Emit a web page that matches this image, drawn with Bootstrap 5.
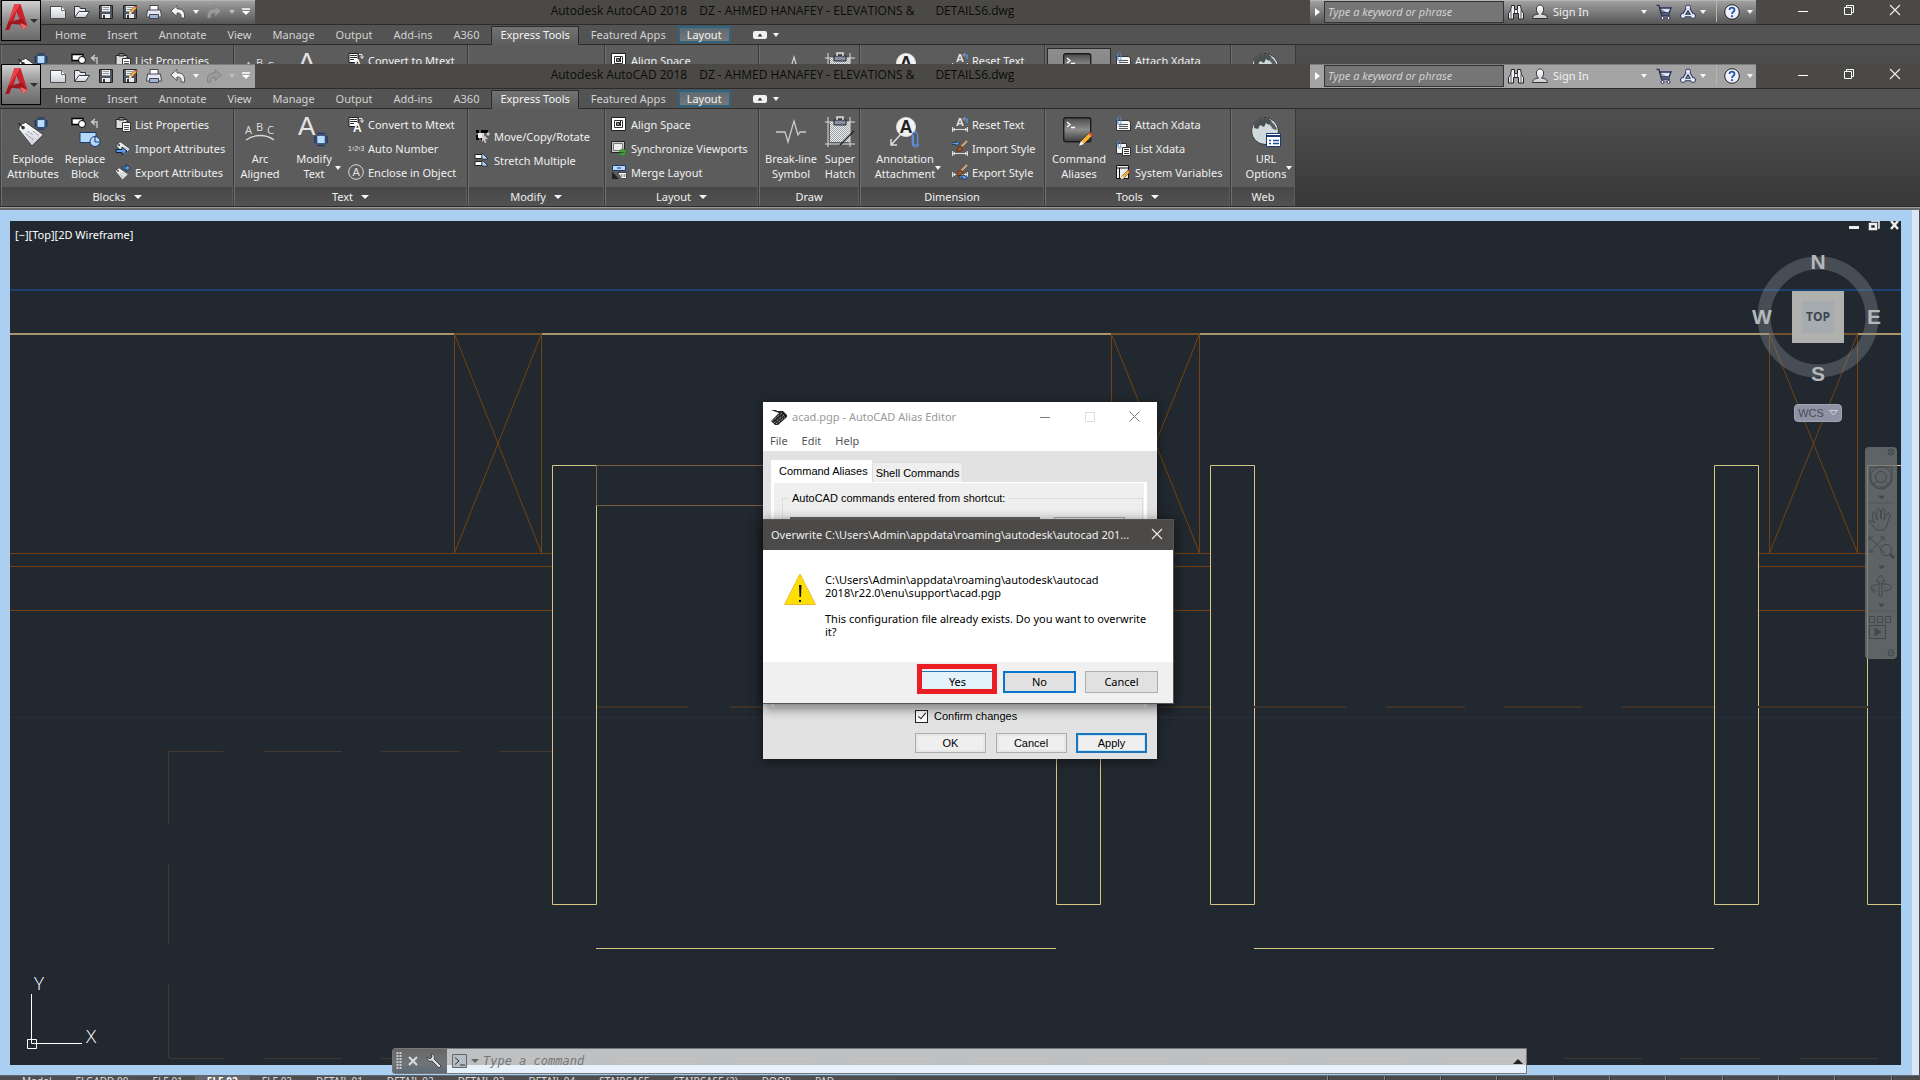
<!DOCTYPE html>
<html lang="en">
<head>
<meta charset="utf-8">
<meta name="viewport" content="width=device-width, initial-scale=1">
<title>Autodesk AutoCAD 2018</title>
<link href="https://cdn.jsdelivr.net/npm/bootstrap@5.3.0/dist/css/bootstrap.min.css" rel="stylesheet">
<style>
:root{--ui:"Noto Sans","Open Sans",sans-serif;--win:"Liberation Sans",Arial,sans-serif;--ink:#f0f0f0}
body{font-family:var(--ui);font-size:11px;line-height:15px;background:#4b4946;color:var(--ink);overflow:hidden}
button,a{font:inherit;color:inherit;text-decoration:none}
button{background:none;border:0;padding:0}
svg{display:block;flex:none}
.i16{width:16px;height:16px}
.i32{width:32px;height:32px}
.dn{width:0;height:0;border:3px solid transparent;border-top:4px solid #f4f4f4;border-bottom:0;flex:none}
.dn.wide{border-width:4px 4px 0}
.dn.off{border-top-color:#c0c0c0}
.dn.dim{border-top-color:#666}

/* application header */
.band{height:64px;overflow:hidden;flex:none}
.appbtn{left:1px;top:0;width:40px;height:41px;border:1px solid #000;background:linear-gradient(#d0d0d0,#8e8e8e 50%,#6a6a6a);z-index:2;padding:0 0 8px 2px}
.appbtn .dn{border-top-color:#333;margin:8px 0 0 1px}
.titlerow{height:24px;background:#4b4946;padding-left:41px}
.qat,.info{height:24px;background:#a3a3a3;border-top:1px solid #7d7d7d;padding-bottom:2px}
.qat{width:214px;padding-left:5px}
.band .qat,.band .info{background:linear-gradient(#a0a0a0,#555);border-top-color:#b5b5b5}
.b24{width:24px}.b12{width:12px}.b16{width:16px}.b14{width:14px}
.apptitle{color:#0b0b0b;font:12px/22px "Open Sans","Noto Sans",sans-serif;padding-bottom:2px}
.gap-a{margin-left:12px}.gap-b{margin-left:21px}
.info{width:446px}
.search{width:180px;height:22px;background:#757575;border:1px solid #333;color:#ddd;padding:0 0 0 3px;font-style:italic;border-radius:0;outline:0}
.search::placeholder{color:#d2d2d2;opacity:1}
.signin{width:100px;padding:0 5px 0 1px}
.vsep{width:1px;height:21px;background:#b4b4b4;margin:0 3px 0 4px}
.winbtns{padding:0 2px 0 24px}
.winbtn{width:46px;height:20px}
.tabrow{height:21px;background:#535353;border-top:1px solid #2b2b2b;border-bottom:1px solid #2b2b2b;padding-left:45px;gap:1px}
.rtab{padding:0 8px;margin:0 1px;border:1px solid transparent;height:19px;line-height:17px;color:#d2d2d2}
.rtab:hover{color:#fff}
.rtab.on{background:linear-gradient(#727272,#5d5d5d);border-color:#2b2b2b;border-bottom-color:#5d5d5d;color:#f4f4f4;height:20px;margin-top:1px;line-height:15px}
.rtab.ctx{background:linear-gradient(#5d6a72,#777);border:2px solid #2f6480;color:#f4f4f4;line-height:13px;height:17px;padding:0 7px;margin-top:1px}
.rshow{margin-left:20px;gap:6px}
.ribbon{height:98px;background:linear-gradient(#4f4f4f,#383838);display:grid;grid-template-columns:233px 234px 137px 154px 101px 185px 186px 65px;padding-left:1px;border-bottom:1px solid #2b2b2b}
.rpanel{background:#5c5c5c;border-left:1px solid #6e6e6e;border-right:1px solid #3a3a3a;min-width:0}
.rbody{height:78px;padding:3px 0 0 1px}
.rname{height:19px;background:linear-gradient(#474747,#525252);line-height:19px;margin-right:1px}
.big{height:74px;padding-top:3px;line-height:15px;text-align:center;border:1px solid transparent}
.big .i32{margin-bottom:3px}
.big>.dn{position:absolute;right:2px;bottom:15px}
.w60{width:60px}.w48{width:48px}.w44{width:44px}.w38{width:38px}.w78{width:78px}.w64{width:64px}
.band .lit{background:linear-gradient(#8d8d8d,#777);border-color:#2b2b2b}
.stack{padding-left:4px}
.stack.mid{padding-top:12px}
.small-b{height:24px;gap:4px;white-space:nowrap}
.under{height:3px;background:linear-gradient(#9a9a9a 33%,#6a6a6a 34%)}

/* drawing area */
.mdi{background:#abcff1;padding:11px 18px 10px 10px;border-right:1px solid #4b4946;min-height:0}
.mdi::after{content:"";position:absolute;top:0;bottom:0;right:0;width:7px;background:#dbe6f5}
.view{background:#21282f}
.vlabel{left:5px;top:6px;color:#fff}
.vwin{right:0;top:0;height:13px;margin-right:-3px}
.vwin button{width:20px}
.cube{right:16px;top:28px;width:134px;height:136px}
.wcs{right:59px;top:183px;width:48px;height:18px;background:rgba(160,165,184,.85);border-radius:4px;color:#484d58;border:1px solid #a0a5b4;font-family:var(--win)}
.wcs svg{margin-left:5px}
.navbar-v{right:4px;top:226px;width:32px;height:212px;background:rgba(110,115,116,.8);border-radius:4px;color:#42484c}
.cmd{left:392px;right:392px;bottom:1px;height:26px;border:1px solid #777;border-radius:3px 0 0 3px;z-index:3}
.cmdl{width:54px;background:linear-gradient(#676767,#707478 60%,#5d6a76);padding-left:3px;gap:6px}
.cmdr{background:rgba(255,255,255,.71);padding-left:5px}
.cmdr input{background:none;border:0;outline:0;font:italic 12px "DejaVu Sans Mono",monospace;padding:0 0 0 4px;color:#555}
.cmdr input::placeholder{color:#777;opacity:1}
.up{border:5px solid transparent;border-bottom:5px solid #222;border-top:0;margin:0 3px 0}
.foot{height:5px;background:#4a4a4a;overflow:hidden;border-top:1px solid #5c6a77}
.ltabs{width:897px;background:#4e4e4e;height:24px;padding-left:10px}
.ltabs a{padding:0 12px;white-space:nowrap;font-size:10px;line-height:10px;color:#ddd}
.ltabs a.on{font-weight:700;color:#fff;background:#666}
.stat{width:620px;height:24px}
.stat i{border-left:1px solid #888;border-right:1px solid #333}

/* dialogs */
.dlg{color:#000}
.alias{left:763px;top:402px;width:394px;height:357px;background:#e2e2e2;box-shadow:0 2px 10px rgba(0,0,0,.5);font-family:var(--win)}
.alias .cap{height:49px;background:#fff;font-family:var(--ui)}
.capline{height:29px;padding-left:8px;color:#999}
.capline .nm{margin-left:5px}
.cbtn{width:45px;height:28px}
.menu2{padding-left:7px;gap:14px;color:#555;line-height:20px}
.abody{padding:9px 10px 0 8px}
.atab{height:20px;line-height:18px;background:#efefef;border:1px solid #dcdcdc;border-bottom:0;padding:0 3px}
.atab.on{height:22px;line-height:18px;background:#fff;padding:0 3px 2px 7px;border-color:#fff}
.apane{background:#efefef;border:3px solid #fff;border-bottom:0;height:225px;padding:9px 1px 0 8px;border-top-width:1px}
.apane fieldset{border:1px solid #dcdcdc;height:190px;position:relative;margin-top:6px;padding:18px 17px 0 7px}
.apane legend{position:absolute;top:-8px;left:5px;width:auto;font-size:11px;line-height:15px;margin:0;padding:0 4px;background:#efefef;float:none}
.lst{width:250px;height:22px;border:2px solid #666;background:#fff;border-radius:0}
.wbtn{width:73px;height:22px;background:#e1e1e1;border:1px solid #adadad;color:#000;line-height:18px;padding:0}
.wbtn.std{width:71px;height:20px;border:1px solid #adadad;box-shadow:inset 0 0 0 2px #e6e6e6;background:#efefef}
.wbtn.std.def{border:2px solid #1c74bb;box-shadow:inset 0 0 0 1px #bfe6fb;line-height:16px}
.wbtn.foc{border:2px solid #0b74cc}
.wbtn.hot{background:#e3f1fb;border-color:#1c74bb}
.abot{left:152px;right:10px;bottom:6px}
.confirm{margin-bottom:9px}
.chk{appearance:none;width:13px;height:13px;border:1px solid #222;background:#fff;margin:0 6px 0 0;position:relative}
.chk:checked::after{content:"";position:absolute;left:4px;top:0;width:4px;height:8px;border:solid #222;border-width:0 1px 1px 0;transform:rotate(40deg)}
.over{left:763px;top:519px;width:411px;height:185px;background:#fff;box-shadow:0 3px 12px rgba(0,0,0,.6);z-index:4;border:1px solid #555;border-left:0}
.over .ocap{height:30px;background:#4b4a48;color:#eee;padding:0 0 2px 8px}
.omsg{height:112px;padding:23px 10px 0 21px;gap:9px;line-height:13px}
.omsg p{margin:0 0 13px}
.ofoot{height:41px;background:#f0f0f0;padding:9px 15px 0 0;gap:9px}
.ring{left:154px;top:144px;width:80px;height:30px;border:5px solid #ea1c24;pointer-events:none}
</style>
<script src="https://cdn.jsdelivr.net/npm/bootstrap@5.3.0/dist/js/bootstrap.bundle.min.js"></script>
</head>
<body class="vh-100 d-flex flex-column">

<svg width="0" height="0" class="position-absolute" aria-hidden="true">
<defs>
<linearGradient id="gl" x1="0" y1="0" x2="0" y2="1"><stop offset="0" stop-color="#fff"/><stop offset="1" stop-color="#c9ced6"/></linearGradient>
<linearGradient id="gd" x1="0" y1="0" x2="0" y2="1"><stop offset="0" stop-color="#4a4a4a"/><stop offset=".5" stop-color="#8d8d8d"/><stop offset="1" stop-color="#3c3c3c"/></linearGradient>
<pattern id="hat" width="2" height="2" patternUnits="userSpaceOnUse"><path d="M0 0h1v1h-1zM1 1h1v1h-1z" fill="#9aa0a8"/></pattern>
<symbol id="logo" viewBox="0 0 24 28"><path d="M1 27 10 1h6l7 22-5 4-3-7-8 1-2 6z" fill="#c8232c"/><path d="M10 1h6L4 19z" fill="#e8434a"/><path d="M12 9l3 7-6 2z" fill="#8d8d8d"/><path d="M4 19l14-3 4 6-15-1-3 6-3 0z" fill="#9e1820"/><path d="M16 20l7 3-5 4z" fill="#e56a6e"/></symbol>
<symbol id="new" viewBox="0 0 16 16"><path d="M.5 2.500h11l4 4v8h-15z" fill="url(#gl)" stroke="#4a4a4a"/><path d="M11.500 2.500v4h4" fill="#fff" stroke="#666"/></symbol>
<symbol id="open" viewBox="0 0 16 16"><path d="M.5 13.500v-11h5l1 2h5v3" fill="#e6e9ee" stroke="#333"/><path d="M.5 13.500 5 7.500h10.500l-4 6z" fill="url(#gl)" stroke="#333a44"/></symbol>
<symbol id="save" viewBox="0 0 16 16"><path d="M1.500 1.500h13v13h-13z" fill="#4c5560" stroke="#222"/><path d="M4 2h8v5.500H4zM4 10h8v4H4z" fill="#e9ecf0"/><path d="M5 11h2v3H5z" fill="#333"/><path d="M5 3.500h6M5 5.500h6" stroke="#999"/></symbol>
<symbol id="print" viewBox="0 0 16 16"><path d="M4 1.500h8v5H4z" fill="#fff" stroke="#445"/><path d="M1.500 6h13l1 7h-15z" fill="#e4e8ee" stroke="#445"/><path d="M3.500 10.500h9v4h-9z" fill="#9db4d6" stroke="#445"/></symbol>
<symbol id="undo" viewBox="0 0 16 16"><path d="M.8 7 7 1.500v3.300c6 0 8 3 7.500 9.200h-3.500c.6-4-.8-5-4-5v3.500z" fill="#f2f2f2" stroke="#444" stroke-width=".9"/></symbol>
<symbol id="redo" viewBox="0 0 16 16"><path d="M15.200 7 9 1.500v3.300c-6 0-8 3-7.500 9.200H5c-.6-4 .8-5 4-5v3.500z" fill="#9b9b9b" stroke="#808080" stroke-width=".9"/></symbol>
<symbol id="pen" viewBox="0 0 16 16"><path d="M1 15l2-5 9-9 3 3-9 9z" fill="#f2b43c" stroke="#4a3010" stroke-width=".8"/><path d="M1 15l2-5 3 3z" fill="#fff"/><path d="M10.500 2.500l3 3 1.500-1.500-3-3z" fill="#d6504a"/></symbol>
<symbol id="bino" viewBox="0 0 16 16"><path d="M3.500 1.500h3v4h3v-4h3l1 5 2 3v5.500h-5V9.500H5.500V15h-5V9.500l2-3z" fill="#eef1f5" stroke="#222"/><path d="M3 6v8.500M13 6v8.500M6.500 5v4M9.500 5v4" stroke="#555"/></symbol>
<symbol id="user" viewBox="0 0 16 16"><path d="M8 1c5 0 4 8 1.500 9 4 .5 6 2 6 4.500H.5c0-2.500 2-4 6-4.500C4 9 3 1 8 1z" fill="url(#gl)" stroke="#333"/></symbol>
<symbol id="cart" viewBox="0 0 16 16"><path d="M.5 1.500H3L5.500 11H14M3.500 4h11.500l-2 5H5z" fill="#dfe5f5" stroke="#26325a" stroke-width="1.300"/><circle cx="6.500" cy="14" r="1.500" fill="#fff" stroke="#26325a"/><circle cx="12.500" cy="14" r="1.500" fill="#fff" stroke="#26325a"/></symbol>
<symbol id="net" viewBox="0 0 16 16"><path d="M8 4 3.500 11.500h9z" fill="none" stroke="#26325a" stroke-width="3.600" stroke-linejoin="round"/><g fill="#e8ecf6" stroke="#26325a"><circle cx="8" cy="3.500" r="2.500"/><circle cx="3" cy="12" r="2.500"/><circle cx="13" cy="12" r="2.500"/></g><path d="M8 4 3.500 11.500h9z" fill="none" stroke="#e0e5f2" stroke-width="1.600" stroke-linejoin="round"/></symbol>
<symbol id="help" viewBox="0 0 16 16"><circle cx="8" cy="8" r="7.300" fill="#eef2fa" stroke="#222"/><path d="M5.500 6c0-3.500 5.200-3 5 0 0 1.800-2.500 1.800-2.500 4" fill="none" stroke="#2a50a8" stroke-width="1.800"/><circle cx="8" cy="12.200" r="1.100" fill="#2a50a8"/></symbol>
<symbol id="w-min" viewBox="0 0 12 12"><path d="M1 7.500h10" stroke="#fff"/></symbol>
<symbol id="w-res" viewBox="0 0 12 12"><path d="M1.500 3.500h7v7h-7zM3.500 3V1.500h7v7H9" fill="none" stroke="#fff"/></symbol>
<symbol id="w-x" viewBox="0 0 12 12"><path d="M1 1l10 10M11 1 1 11" stroke="currentColor" stroke-width="1.100"/></symbol>
<symbol id="blk" viewBox="0 0 16 16"><path d="M3.500 3.500h9v9h-9z" fill="#b8dcfa" stroke="#1c3a70"/><path d="M1.500 4v8M14.500 4v8M4 1.500h8M4 14.500h8" stroke="#1c3a70" stroke-width="1.500"/></symbol>
<symbol id="tag" viewBox="0 0 32 32"><path d="M3 12l1-5 7-3 20 14-13 13z" fill="url(#gl)" stroke="#333" transform="translate(-1 1)"/><circle cx="7" cy="11" r="2" fill="#333"/><path d="M2 6l5 5" stroke="#222" stroke-width="1.500"/><path d="M12 15l6 4M18 15l7 5M10 18l9 7" stroke="#78808a" stroke-dasharray="3 1"/></symbol>
<symbol id="explode" viewBox="0 0 32 32"><use href="#tag" width="28" height="30" y="1"/><use href="#blk" x="17" y="0" width="14" height="15"/></symbol>
<symbol id="replace" viewBox="0 0 32 32"><path d="M3 2.500h11v6H3z" fill="#fff" stroke="#000" stroke-width="1.300"/><circle cx="13" cy="8" r="3.500" fill="#fff" stroke="#000"/><path d="M28 12V6h-5m3-3-3.500 3L26 9" fill="none" stroke="#ccc" stroke-width="1.300"/><path d="M11 16.500h16v10H11z" fill="#b4d8fa" stroke="#1c3a70"/><circle cx="26" cy="25.500" r="5" fill="#b4d8fa" stroke="#1c3a70"/><path d="M26 21v5h4" fill="none" stroke="#1c3a70"/></symbol>
<symbol id="lprop" viewBox="0 0 16 16"><path d="M1 3.500h11v9H1z" fill="#ddd" stroke="#222"/><path d="M4 4V1.500h5V4z" fill="#888" stroke="#222"/><path d="M7.500 6.500h8v9h-8z" fill="#fff" stroke="#333"/><path d="M9 9.500h5M9 11.500h5M9 13.500h5" stroke="#555"/></symbol>
<symbol id="impa" viewBox="0 0 16 16"><use href="#tag" width="15" height="15" y="0" x="1"/><path d="M1 9.500h6V7l5 4-5 4v-2.500H1z" fill="#5a96e6" stroke="#123"/></symbol>
<symbol id="expa" viewBox="0 0 16 16"><use href="#tag" width="14" height="14" y="2"/><path d="M7 3h4V.5l4.500 3.500L11 7.500V5H7z" fill="#5a96e6" stroke="#123" stroke-width=".7"/></symbol>
<symbol id="arc" viewBox="0 0 32 32"><g fill="#d8d8d8" font-family="Noto Sans" font-size="11"><text x="1" y="18">A</text><text x="12" y="15">B</text><text x="23" y="18">C</text></g><path d="M2 24c8-6 20-6 28 0" fill="none" stroke="#d8d8d8" stroke-width="1.300"/></symbol>
<symbol id="modt" viewBox="0 0 32 32"><text x="0" y="19" fill="#e4e4e4" font-family="Liberation Sans" font-size="26">A</text><use href="#blk" x="15" y="16" width="16" height="15"/></symbol>
<symbol id="cvt" viewBox="0 0 16 16"><path d="M1 1.500h9v9H1z" fill="#fff" stroke="#222"/><path d="M2 3.500h7M2 5.500h7M2 7.500h4" stroke="#333"/><path d="M11 2.500h3V6m-1.500-1.500L14 6.500l1.500-2" fill="none" stroke="#eee"/><text x="5" y="16" fill="#fff" font-family="Liberation Sans" font-weight="700" font-size="12">A</text></symbol>
<symbol id="num" viewBox="0 0 16 16"><text x="0" y="11" fill="#e8e8e8" font-family="Liberation Sans" font-size="7">1›2›3</text></symbol>
<symbol id="enc" viewBox="0 0 16 16"><circle cx="8" cy="8" r="7.300" fill="none" stroke="#d8d8d8"/><text x="4.500" y="12" fill="#e4e4e4" font-family="Liberation Sans" font-size="11">A</text></symbol>
<symbol id="mcr" viewBox="0 0 16 16"><path d="M2 3.500h12M2 10.500h6M3.500 2v10M11.500 2v4" stroke="#000" stroke-width="3" stroke-dasharray="3 2"/><path d="M4 5h6v5H4z" fill="#eee"/><path d="M8 5l6 6-3 .5 1.500 3-1.500.5-1.500-3L8 14z" fill="#ccc"/><path d="M12 6h4M14 4v4" stroke="#fff" stroke-width=".8"/></symbol>
<symbol id="str" viewBox="0 0 16 16"><path d="M1 2.500h7v4H1zM1 9.500h7v4H1z" fill="#fff" stroke="#222"/><path d="M8 1l6 6H8zM8 8l6 6H8z" fill="#b4d8fa" stroke="#123" stroke-width=".7"/></symbol>
<symbol id="alg" viewBox="0 0 16 16"><path d="M.5 1.500h14v13H.5z" fill="#fff" stroke="#222"/><path d="M3.500 4.500h8v7h-8z" fill="none" stroke="#333"/><path d="M5.500 6.500h3v3h-3zM9.500 5v5" fill="#888" stroke="#222"/></symbol>
<symbol id="syn" viewBox="0 0 16 16"><path d="M.5 1.500h13v11H.5z" fill="#ccc" stroke="#222"/><path d="M2.500 3.500h9v7h-9z" fill="#ececec" stroke="#777"/><path d="M8.500 12c0-3 4-4 5.500-2l1-1v4h-4l1.500-1c-1-1-2-1-2.500.5zM15 13c-.5 3-4 3.500-5.500 2l-1 1v-3" fill="#3da33d" stroke="#1f6b1f" stroke-width=".5"/></symbol>
<symbol id="mrg" viewBox="0 0 16 16"><path d="M1.500 1.500h13v5h-13z" fill="#b4d8fa" stroke="#1c3a70"/><path d="M6 4h4" stroke="#1c3a70"/><path d="M1 7.500 8 15H1z" fill="#222"/><path d="M6.500 8.500h9v6h-5z" fill="#fff" stroke="#444"/><path d="M9.500 10h2v3h-2zM12.500 10h2v3h-2z" fill="#999"/></symbol>
<symbol id="brk" viewBox="0 0 32 32"><path d="M1 16h9l3 10 6-21 4 14 2-3h6" fill="none" stroke="#ccc" stroke-width="1.300"/></symbol>
<symbol id="hatch" viewBox="0 0 32 32"><path d="M6 6h20v20H6z" fill="#eee"/><path d="M6 6h20v20H6z" fill="url(#hat)"/><path d="M4 1v30M26 1v30M1 6h30M1 28h30" stroke="#ddd"/><path d="M10 4h12v5H10z" fill="#8690a0" stroke="#222"/><path d="M13 4V1h6v3" fill="none" stroke="#ddd" stroke-width="1.500"/><path d="M30 15 16 29" stroke="#222" stroke-width="1.500"/></symbol>
<symbol id="clip" viewBox="0 0 8 16"><path d="M2 4v7c0 3 4 3 4 0V4c0-4-5-4-5 0v7c0 5 6 5 6 1" fill="none" stroke="#5a8fd8" stroke-width="1.200"/></symbol>
<symbol id="ann" viewBox="0 0 32 32"><path d="M13 17 2 29m0-6v6h6" fill="none" stroke="#ddd" stroke-width="1.500"/><circle cx="17" cy="11" r="9.500" fill="#f2f2f2" stroke="#ddd"/><text x="10.500" y="17" fill="#222" font-family="Liberation Sans" font-weight="700" font-size="18">A</text><use href="#clip" x="22" y="15" width="9" height="17"/></symbol>
<symbol id="dimb" viewBox="0 0 16 16"><path d="M.5 10v5M15.500 10v5M1 12.500h14M3 11l-2 1.500L3 14M13 11l2 1.500L13 14" fill="none" stroke="#ddd"/></symbol>
<symbol id="rst" viewBox="0 0 16 16"><use href="#dimb" y="1" width="16" height="16"/><text x="4" y="10" fill="#e4e4e4" font-family="Liberation Sans" font-weight="700" font-size="11">A</text><path d="M12 3h3v4M13 1l-2 2 2 2" fill="none" stroke="#6aa4ee"/></symbol>
<symbol id="brush" viewBox="0 0 16 16"><path d="M15 1 9 7" stroke="#d6a878" stroke-width="1.800"/><path d="M5 11c0-4 3-5 5-4 1 3-1 5-5 4z" fill="#a05a28" stroke="#5a2c10"/></symbol>
<symbol id="ims" viewBox="0 0 16 16"><use href="#dimb" y="1" width="16" height="16"/><use href="#brush" width="16" height="16"/><path d="M0 2.500h4V1l4 2.500L4 6V4.500H0z" fill="#5a96e6" stroke="#123" stroke-width=".6"/></symbol>
<symbol id="exs" viewBox="0 0 16 16"><use href="#dimb" y="-2" width="16" height="16"/><use href="#brush" width="16" height="16"/><path d="M7 12h4v-1.500l5 3-5 2.500v-2H7z" fill="#5a96e6" stroke="#123" stroke-width=".6"/></symbol>
<symbol id="cmdi" viewBox="0 0 32 32"><rect x=".7" y="1.700" width="27" height="24" rx="2" fill="url(#gd)" stroke="#1c1c1c" stroke-width="1.400"/><path d="M4 6l3 2.500L4 11M8 11.500h4" fill="none" stroke="#fff" stroke-width="1.300"/><use href="#pen" x="15" y="15" width="16" height="16"/></symbol>
<symbol id="atx" viewBox="0 0 16 16"><path d="M1.500 4.500h12l2 2v8h-14z" fill="#f4f4f4" stroke="#333"/><path d="M4 8.500h9M4 10.500h9M4 12.500h9" stroke="#555"/><use href="#clip" x="2" y="0" width="5" height="10"/></symbol>
<symbol id="lsx" viewBox="0 0 16 16"><path d="M1.500 3.500h10v10h-10z" fill="#f4f4f4" stroke="#333"/><use href="#clip" x="2" y="0" width="5" height="9"/><path d="M7.500 7.500h8v8h-8z" fill="#fff" stroke="#333"/><path d="M9 9.500h5M9 11.500h5M9 13.500h5" stroke="#333"/></symbol>
<symbol id="sys" viewBox="0 0 16 16"><path d="M1.500 1.500h12v13h-12z" fill="#eee" stroke="#111"/><path d="M1.500 4h12M4.500 4v10" stroke="#111"/><use href="#pen" x="5" y="5" width="11" height="11"/></symbol>
<symbol id="url" viewBox="0 0 32 32"><circle cx="15" cy="15" r="13.500" fill="#cfdadd" stroke="#333"/><path d="M4 8c2-3 6-6 11-6 4 0 6 2 7 4l-3 3-3-2-2 4-4-2-2 4-4-1z" fill="#4a4f50"/><path d="M20 5c4 2 6 5 7 9l-4-1-3-4z" fill="#5a5f60"/><path d="M16.500 17.500h14v13h-14z" fill="#fff" stroke="#1c3a70"/><path d="M17 19h13v2H17z" fill="#1c3a70"/><path d="M19 24.500h2M19 27.500h2M23 24.500h6M23 27.500h6" stroke="#1c50a0" stroke-width="1.500"/></symbol>
</defs>
</svg>

<div class="band" aria-hidden="true"></div>

<header class="position-relative flex-shrink-0" id="apphead">
  <button class="appbtn position-absolute d-flex align-items-center" aria-label="Application menu"><svg width="25" height="28"><use href="#logo"/></svg><span class="dn wide"></span></button>
  <div class="titlerow d-flex">
    <div class="qat d-flex align-items-center">
      <button class="b24 d-flex justify-content-center" aria-label="New"><svg class="i16"><use href="#new"/></svg></button>
      <button class="b24 d-flex justify-content-center" aria-label="Open"><svg class="i16"><use href="#open"/></svg></button>
      <button class="b24 d-flex justify-content-center" aria-label="Save"><svg class="i16"><use href="#save"/></svg></button>
      <button class="b24 d-flex justify-content-center" aria-label="Save As"><svg class="i16"><use href="#save"/><use href="#pen" x="6" width="10" height="12"/></svg></button>
      <button class="b24 d-flex justify-content-center" aria-label="Plot"><svg class="i16"><use href="#print"/></svg></button>
      <button class="b24 d-flex justify-content-center" aria-label="Undo"><svg class="i16"><use href="#undo"/></svg></button>
      <button class="b12 d-flex justify-content-center" aria-label="Undo list"><span class="dn"></span></button>
      <button class="b24 d-flex justify-content-center" aria-label="Redo"><svg class="i16"><use href="#redo"/></svg></button>
      <button class="b12 d-flex justify-content-center" aria-label="Redo list"><span class="dn off"></span></button>
      <button class="b16 d-flex justify-content-center" aria-label="Customize"><svg width="8" height="8"><path d="M0 1h8" stroke="#fff" stroke-width="1.500"/><path d="M0 3h8L4 7z" fill="#fff"/></svg></button>
    </div>
    <div class="apptitle flex-fill d-flex align-items-center justify-content-center text-nowrap"><span>Autodesk AutoCAD 2018</span><span class="gap-a">DZ - AHMED HANAFEY - ELEVATIONS &amp;</span><span class="gap-b">DETAILS6.dwg</span></div>
    <div class="info d-flex align-items-center">
      <button class="b14 d-flex justify-content-center" aria-label="Collapse"><svg width="5" height="8"><path d="M0 0l5 4-5 4z" fill="#fff"/></svg></button>
      <input class="search" type="text" placeholder="Type a keyword or phrase" aria-label="Search">
      <button class="b24 d-flex justify-content-center" aria-label="Find"><svg class="i16"><use href="#bino"/></svg></button>
      <button class="b24 d-flex justify-content-center" aria-label="Account"><svg class="i16"><use href="#user"/></svg></button>
      <button class="signin d-flex align-items-center justify-content-between"><span>Sign In</span><span class="dn"></span></button>
      <button class="b24 d-flex justify-content-center" aria-label="App store"><svg class="i16"><use href="#cart"/></svg></button>
      <button class="b24 d-flex justify-content-center" aria-label="Stay connected"><svg class="i16"><use href="#net"/></svg></button>
      <button class="b12 d-flex" aria-label="Connect options"><span class="dn"></span></button>
      <span class="vsep"></span>
      <button class="b24 d-flex justify-content-center" aria-label="Help"><svg class="i16"><use href="#help"/></svg></button>
      <button class="b12 d-flex justify-content-center" aria-label="Help options"><span class="dn"></span></button>
    </div>
    <div class="winbtns d-flex">
      <button class="winbtn d-flex align-items-center justify-content-center" aria-label="Minimize"><svg width="12" height="12"><use href="#w-min"/></svg></button>
      <button class="winbtn d-flex align-items-center justify-content-center" aria-label="Restore"><svg width="12" height="12"><use href="#w-res"/></svg></button>
      <button class="winbtn d-flex align-items-center justify-content-center" aria-label="Close"><svg width="12" height="12"><use href="#w-x"/></svg></button>
    </div>
  </div>
  <nav class="tabrow nav flex-nowrap align-items-start">
    <a class="rtab" href="#">Home</a><a class="rtab" href="#">Insert</a><a class="rtab" href="#">Annotate</a><a class="rtab" href="#">View</a><a class="rtab" href="#">Manage</a><a class="rtab" href="#">Output</a><a class="rtab" href="#">Add-ins</a><a class="rtab" href="#">A360</a><a class="rtab on" href="#">Express Tools</a><a class="rtab" href="#">Featured Apps</a><a class="rtab ctx" href="#">Layout</a>
    <button class="rshow d-flex align-items-center align-self-center" aria-label="Ribbon display"><svg width="14" height="8"><rect width="14" height="8" rx="2" fill="#f0f0f0"/><path d="M4.500 5.500 7 2.500l2.500 3z" fill="#333"/></svg><span class="dn"></span></button>
  </nav>
  <div class="ribbon">
    <section class="rpanel">
      <div class="rbody d-flex">
        <button class="big w60 d-flex flex-column align-items-center"><svg class="i32"><use href="#explode"/></svg><span>Explode<br>Attributes</span></button>
        <button class="big w44 d-flex flex-column align-items-center"><svg class="i32"><use href="#replace"/></svg><span>Replace<br>Block</span></button>
        <div class="stack ps-2">
          <button class="small-b d-flex align-items-center"><svg class="i16"><use href="#lprop"/></svg>List Properties</button>
          <button class="small-b d-flex align-items-center"><svg class="i16"><use href="#impa"/></svg>Import Attributes</button>
          <button class="small-b d-flex align-items-center"><svg class="i16"><use href="#expa"/></svg>Export Attributes</button>
        </div>
      </div>
      <div class="rname d-flex align-items-center justify-content-center gap-2">Blocks <span class="dn wide"></span></div>
    </section>
    <section class="rpanel">
      <div class="rbody d-flex">
        <button class="big w48 d-flex flex-column align-items-center"><svg class="i32"><use href="#arc"/></svg><span>Arc<br>Aligned</span></button>
        <button class="big w60 d-flex flex-column align-items-center position-relative"><svg class="i32"><use href="#modt"/></svg><span>Modify<br>Text</span><i class="dn"></i></button>
        <div class="stack">
          <button class="small-b d-flex align-items-center"><svg class="i16"><use href="#cvt"/></svg>Convert to Mtext</button>
          <button class="small-b d-flex align-items-center"><svg class="i16"><use href="#num"/></svg>Auto Number</button>
          <button class="small-b d-flex align-items-center"><svg class="i16"><use href="#enc"/></svg>Enclose in Object</button>
        </div>
      </div>
      <div class="rname d-flex align-items-center justify-content-center gap-2">Text <span class="dn wide"></span></div>
    </section>
    <section class="rpanel">
      <div class="rbody d-flex">
        <div class="stack mid">
          <button class="small-b d-flex align-items-center"><svg class="i16"><use href="#mcr"/></svg>Move/Copy/Rotate</button>
          <button class="small-b d-flex align-items-center"><svg class="i16"><use href="#str"/></svg>Stretch Multiple</button>
        </div>
      </div>
      <div class="rname d-flex align-items-center justify-content-center gap-2">Modify <span class="dn wide"></span></div>
    </section>
    <section class="rpanel">
      <div class="rbody d-flex">
        <div class="stack">
          <button class="small-b d-flex align-items-center"><svg class="i16"><use href="#alg"/></svg>Align Space</button>
          <button class="small-b d-flex align-items-center"><svg class="i16"><use href="#syn"/></svg>Synchronize Viewports</button>
          <button class="small-b d-flex align-items-center"><svg class="i16"><use href="#mrg"/></svg>Merge Layout</button>
        </div>
      </div>
      <div class="rname d-flex align-items-center justify-content-center gap-2">Layout <span class="dn wide"></span></div>
    </section>
    <section class="rpanel">
      <div class="rbody d-flex">
        <button class="big w60 d-flex flex-column align-items-center text-nowrap"><svg class="i32"><use href="#brk"/></svg><span>Break-line<br>Symbol</span></button>
        <button class="big w38 d-flex flex-column align-items-center"><svg class="i32"><use href="#hatch"/></svg><span>Super<br>Hatch</span></button>
      </div>
      <div class="rname d-flex align-items-center justify-content-center">Draw</div>
    </section>
    <section class="rpanel">
      <div class="rbody d-flex">
        <button class="big w78 ms-1 d-flex flex-column align-items-center position-relative"><svg class="i32"><use href="#ann"/></svg><span>Annotation<br>Attachment</span><i class="dn"></i></button>
        <div class="stack ps-2">
          <button class="small-b d-flex align-items-center"><svg class="i16"><use href="#rst"/></svg>Reset Text</button>
          <button class="small-b d-flex align-items-center"><svg class="i16"><use href="#ims"/></svg>Import Style</button>
          <button class="small-b d-flex align-items-center"><svg class="i16"><use href="#exs"/></svg>Export Style</button>
        </div>
      </div>
      <div class="rname d-flex align-items-center justify-content-center">Dimension</div>
    </section>
    <section class="rpanel">
      <div class="rbody d-flex">
        <button class="big lit w64 d-flex flex-column align-items-center"><svg class="i32"><use href="#cmdi"/></svg><span>Command<br>Aliases</span></button>
        <div class="stack">
          <button class="small-b d-flex align-items-center"><svg class="i16"><use href="#atx"/></svg>Attach Xdata</button>
          <button class="small-b d-flex align-items-center"><svg class="i16"><use href="#lsx"/></svg>List Xdata</button>
          <button class="small-b d-flex align-items-center"><svg class="i16"><use href="#sys"/></svg>System Variables</button>
        </div>
      </div>
      <div class="rname d-flex align-items-center justify-content-center gap-2">Tools <span class="dn wide"></span></div>
    </section>
    <section class="rpanel">
      <div class="rbody d-flex">
        <button class="big w60 ms-1 d-flex flex-column align-items-center position-relative"><svg class="i32"><use href="#url"/></svg><span>URL<br>Options</span><i class="dn"></i></button>
      </div>
      <div class="rname d-flex align-items-center justify-content-center">Web</div>
    </section>
  </div>
</header>
<div class="under flex-shrink-0"></div>

<main class="mdi flex-fill position-relative">
  <div class="view position-relative h-100">
    <svg class="w-100 h-100" viewBox="10 221 1891 844" preserveAspectRatio="xMinYMin slice">
      <path d="M10 290h1891" stroke="#1b4272" stroke-width="2"/>
      <path d="M10 717.500h1891" stroke="#272f3d"/>
      <path d="M10 334h1891" stroke="#ab946a" stroke-width="2"/>
      <g fill="none" stroke="#75420f">
        <path d="M454 334H542M1111 334H1200M1769 334H1858" stroke-width="2" stroke="#73512c"/>
        <path d="M454.500 334V553M541.500 334V553M454.500 334L541.500 553M541.500 334L454.500 553"/>
        <path d="M1111.500 334V553M1199.500 334V553M1111.500 334L1199.500 553M1199.500 334L1111.500 553"/>
        <path d="M1769.500 334V553M1857.500 334V553M1769.500 334L1857.500 553M1857.500 334L1769.500 553"/>
        <path d="M10 553.500H552M10 566.500H552M10 610.500H552M1100 553.500H1210M1100 566.500H1210M1100 610.500H1210M1758 553.500H1868M1758 566.500H1868M1758 610.500H1868"/>
      </g>
      <g fill="none" stroke="#d6c684">
        <path d="M552.500 465.500H596.500V904.500H552.500zM1056.500 465.500H1100.500V904.500H1056.500zM1210.500 465.500H1254.500V904.500H1210.500zM1714.500 465.500H1758.500V904.500H1714.500zM1901 465.500H1867.500V904.500H1901M596 948.500H1056M1254 948.500H1714"/>
      </g>
      <path d="M1056 465.500H597M1056 505.500H596.500V465" fill="none" stroke="#7d6145"/>
      <g fill="none" stroke="#44382c">
        <path d="M597 707H688M730 707H809M1100 707H1210M1254 707H1346M1386 707H1465M1504 707H1582M1622 707H1714M1758 707H1868" stroke-width="2" stroke="#3d332a"/>
        <path d="M169 751.500H223M263 751.500H342M381 751.500H460M499 751.500H552M168.500 751V825M168.500 865V944M168.500 983V1058"/>
        <path d="M169 1058.500H224M263 1058.500H342M381 1058.500H460M500 1058.500H578M618 1058.500H696M735 1058.500H814M853 1058.500H932M972 1058.500H1050M1091 1058.500H1169M1209 1058.500H1287M1327 1058.500H1406M1446 1058.500H1524M1564 1058.500H1642M1681 1058.500H1760M1799 1058.500H1878"/>
      </g>
      <g fill="none" stroke="#fff"><path d="M31.500 994V1043.500H82M27.500 1039.500h9v9h-9z"/></g>
      <g fill="#fff" font-family="Open Sans" font-weight="300" font-size="19"><text x="34" y="990">Y</text><text x="86" y="1043">X</text></g>
    </svg>
    <div class="vlabel position-absolute">[−][Top][2D Wireframe]</div>
    <div class="vwin position-absolute d-flex align-items-start">
      <button aria-label="Minimize drawing"><svg width="12" height="10" class="mx-auto"><path d="M1 6.500h10" stroke="#eee" stroke-width="3"/></svg></button>
      <button aria-label="Restore drawing"><svg width="12" height="10" class="mx-auto"><path d="M4 1V0h7v7h-1" fill="none" stroke="#eee" stroke-width="1.500"/><path d="M2 3h6v5H2z" fill="none" stroke="#eee" stroke-width="2.500"/></svg></button>
      <button aria-label="Close drawing"><svg width="12" height="10" class="mx-auto"><path d="M3 0l7 8M10 0l-7 8" stroke="#eee" stroke-width="2.500"/></svg></button>
    </div>
    <svg class="cube position-absolute" viewBox="1751 249 134 136">
      <circle cx="1818" cy="317" r="54" fill="none" stroke="#8a9198" stroke-opacity=".36" stroke-width="13"/>
      <path d="M1792 291h52v52h-52z" fill="#b0b0ae"/><path d="M1802 301h32v32h-32z" fill="#a6abb0"/>
      <text x="1818" y="321" text-anchor="middle" fill="#3b4450" font-family="Open Sans" font-weight="700" font-size="12">TOP</text>
      <g fill="#b5b8ba" font-family="Liberation Sans" font-weight="700" font-size="21" text-anchor="middle"><text x="1818" y="269">N</text><text x="1762" y="324">W</text><text x="1874" y="324">E</text><text x="1818" y="381">S</text></g>
    </svg>
    <button class="wcs position-absolute d-flex align-items-center justify-content-center">WCS<svg width="9" height="6"><path d="M.5.5h8l-4 4.500z" fill="none" stroke="#ccd"/></svg></button>
    <svg class="navbar-v position-absolute" viewBox="0 0 32 212" fill="none" stroke="currentColor">
      <circle cx="26" cy="5" r="3"/><path d="M24 3l4 4M28 3l-4 4"/>
      <path d="M5 20h22v11a11 11 0 0 1-22 0z"/><circle cx="16" cy="30" r="10.500"/><circle cx="16" cy="30" r="5.500"/><path d="M8 38l4-4M24 38l-4-4"/>
      <path d="M14 49h5l-2.500 3z" fill="currentColor"/><path d="M3 56h26M3 164h26" opacity=".4"/>
      <path d="M12 83c-3-2-5-6-8-9 2-2 4 1 5 2L7 66c1-2 3-1 3 1l2 6V63c1-2 3-2 3 0l1 9 1-9c1-2 3-1 3 1l-1 9 3-6c1-2 3-1 3 1l-4 13-2 2z"/>
      <path d="M4 90l16 16M19 90 5 105M4 94v-4h4M15 90h4v4M5 101v4h4"/><circle cx="21" cy="103" r="5.500"/><path d="M25 107l4 4" stroke-width="3"/>
      <path d="M14 119h5l-2.500 3z" fill="currentColor"/>
      <path d="M14 149v-15h-3l4.500-6 4.500 6h-3v15z"/><path d="M12 144c-9-1-9-6 3-7 13-1 16 6 4 7M10 140l-4 3 4 3"/>
      <path d="M14 157h5l-2.500 3z" fill="currentColor"/>
      <path d="M4.500 169.500h5v6h-5zM12.500 169.500h5v6h-5zM20.500 169.500h5v6h-5zM4.500 178.500h16v13h-16z"/><path d="M10 181v8l6-4z" fill="currentColor"/>
      <circle cx="26" cy="206" r="3"/><path d="M24 206h4"/>
    </svg>
  </div>
  <div class="cmd position-absolute d-flex">
    <div class="cmdl d-flex align-items-center">
      <svg width="6" height="18"><path d="M1.500 0v18M4.500 0v18" stroke="#ccc" stroke-width="2" stroke-dasharray="2 1"/></svg>
      <button class="b12" aria-label="Close command line"><svg width="10" height="10"><path d="M1 1l8 8M9 1l-8 8" stroke="#ddd" stroke-width="2"/></svg></button>
      <button class="b16" aria-label="Customize command line"><svg class="i16" viewBox="0 0 16 16"><path d="M5 1c3 0 4 3 3 5l7 7-2 2-7-7C3 9 1 7 1 4l3 2 2-2z" fill="#e0e0e0" stroke="#444"/></svg></button>
    </div>
    <div class="cmdr flex-fill d-flex align-items-center">
      <svg width="15" height="14"><path d="M.5.5h14v13H.5z" fill="#b4bcc6" stroke="#666"/><path d="M3 3.500 7 7l-4 3.500M8 11h5" fill="none" stroke="#333"/></svg>
      <span class="dn wide dim ms-1"></span>
      <input class="flex-fill" type="text" placeholder="Type a command" aria-label="Command line">
      <span class="up"></span>
    </div>
  </div>
</main>

<footer class="foot flex-shrink-0 d-flex justify-content-between">
  <nav class="ltabs d-flex">
    <a href="#">Model</a><a href="#">ELGADD 00</a><a href="#">ELE 01</a><a class="on" href="#">ELE 02</a><a href="#">ELE 03</a><a href="#">DETAIL 01</a><a href="#">DETAIL 02</a><a href="#">DETAIL 03</a><a href="#">DETAIL 04</a><a href="#">STAIRCASE</a><a href="#">STAIRCASE (2)</a><a href="#">DOOR</a><a href="#">PAD</a>
  </nav>
  <div class="stat d-flex justify-content-around"><i></i><i></i><i></i><i></i><i></i><i></i><i></i><i></i><i></i><i></i><i></i></div>
</footer>

<div class="dlg alias position-absolute" role="dialog" aria-label="acad.pgp - AutoCAD Alias Editor">
  <div class="cap">
    <div class="capline d-flex align-items-center">
      <svg class="i16" viewBox="0 0 16 16"><path d="M0 1h5l1 1h6l4 4v2l-9 8H4L0 12l8-8z" fill="#222"/><path d="M1 12 11 4M3 14l10-8M5 15l9-7" stroke="#ccc" stroke-dasharray="1 1"/></svg>
      <span class="nm flex-fill">acad.pgp - AutoCAD Alias Editor</span>
      <button class="cbtn d-flex align-items-center justify-content-center" aria-label="Minimize"><svg width="10" height="10"><path d="M0 5.500h10" stroke="#777"/></svg></button>
      <button class="cbtn d-flex align-items-center justify-content-center" aria-label="Maximize" disabled><svg width="10" height="10"><path d="M.5.500h9v9h-9z" fill="none" stroke="#ddd"/></svg></button>
      <button class="cbtn d-flex align-items-center justify-content-center" aria-label="Close"><svg width="11" height="11"><path d="M.5.500l10 10M10.500.500l-10 10" stroke="#777"/></svg></button>
    </div>
    <div class="menu2 d-flex"><a href="#">File</a><a href="#">Edit</a><a href="#">Help</a></div>
  </div>
  <div class="abody">
    <div class="d-flex align-items-end"><button class="atab on">Command Aliases</button><button class="atab">Shell Commands</button></div>
    <div class="apane">
      <fieldset class="d-flex justify-content-between"><legend>AutoCAD commands entered from shortcut:</legend>
        <input class="lst" type="text" aria-label="Shortcut commands"><button class="wbtn std" aria-label="Add"></button>
      </fieldset>
    </div>
  </div>
  <div class="abot position-absolute">
    <label class="confirm d-flex align-items-center"><input class="chk" type="checkbox" checked>Confirm changes</label>
    <div class="d-flex justify-content-between"><button class="wbtn std">OK</button><button class="wbtn std">Cancel</button><button class="wbtn std def">Apply</button></div>
  </div>
</div>

<div class="dlg over position-absolute" role="alertdialog" aria-label="Overwrite">
  <div class="ocap d-flex align-items-center justify-content-between"><span>Overwrite C:\Users\Admin\appdata\roaming\autodesk\autocad 201...</span>
    <button class="b24 me-1 d-flex justify-content-center" aria-label="Close"><svg width="12" height="12"><use href="#w-x"/></svg></button></div>
  <div class="omsg d-flex">
    <svg class="i32" viewBox="0 0 32 32"><path d="M16 1 31.500 31.500H.5z" fill="#fde000" stroke="#f0b93a"/><path d="M15 12h2.500l-.5 12h-1.500zM15 27h2v2h-2z" fill="#111"/></svg>
    <div><p>C:\Users\Admin\appdata\roaming\autodesk\autocad<br>2018\r22.0\enu\support\acad.pgp</p><p>This configuration file already exists. Do you want to overwrite<br>it?</p></div>
  </div>
  <div class="ofoot d-flex justify-content-end align-items-start"><button class="wbtn hot">Yes</button><button class="wbtn foc">No</button><button class="wbtn">Cancel</button></div>
  <div class="ring position-absolute"></div>
</div>

<script>
// The window behind shows the same header, cut off below its first ribbon row.
const back = document.getElementById('apphead').cloneNode(true);
back.id = 'backhead';
back.querySelectorAll('.mid, .rname, .big > span, .big > .dn, .small-b:nth-child(n+2)').forEach(el => el.remove());
document.querySelector('.band').append(back);
</script>
</body>
</html>
